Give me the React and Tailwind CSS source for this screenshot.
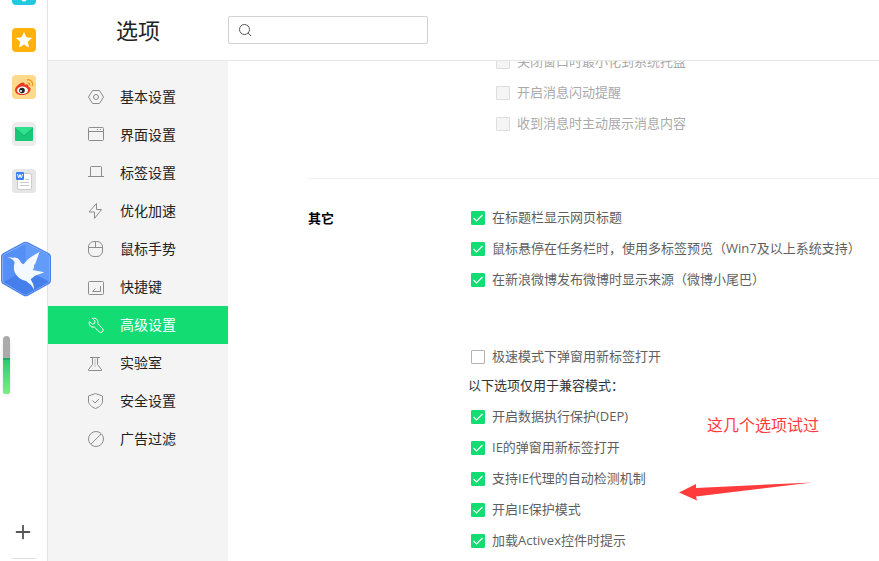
import { Plus } from 'lucide-react'

const navIcons = {
  basic: (
    <>
      <path d="M4.5 1.5h7l4 6.5-4 6.5h-7L.5 8z" />
      <circle cx="8" cy="8" r="2.5" />
    </>
  ),
  window: (
    <>
      <rect x=".5" y=".5" width="15" height="13" rx="1" />
      <path d="M.5 4.5h15M9 2.5h1M12 2.5h1" />
    </>
  ),
  tab: <path d="M0 11.5h16M2.5 11.5v-9a1 1 0 0 1 1-1h9a1 1 0 0 1 1 1v9" />,
  speed: <path d="M8.5.5L1 9h5.5v6.5l7-9H8.5z" />,
  mouse: (
    <>
      <rect x=".5" y=".5" width="14" height="15" rx="5.5" />
      <path d="M.5 6.5h14M7.5.5v6" />
    </>
  ),
  keyboard: (
    <>
      <rect x=".5" y="2.5" width="15" height="13" rx="1" />
      <path d="M12.5 7v5.5h-8l3-3" />
    </>
  ),
  wrench: (
    <path d="M4.500 1.500l2.700 2.700-.7 2.300-2.300.7-2.700-2.700C.3 7.800 2.800 10.800 6.300 10l4.700 4.700a2.300 2.300 0 0 0 3.500-3.200L9.800 6.700C10.700 3 7.800.3 4.500 1.500z" />
  ),
  lab: (
    <>
      <path d="M2 2.500h10M4.500 2.500v7l-4 5v1h13v-1l-4-5v-7" />
      <path d="M7 4.500v7" strokeDasharray="1 1" />
    </>
  ),
  shield: (
    <>
      <path d="M7.5.5l7 2.5v5c0 3.5-3 6-7 7.5-4-1.5-7-4-7-7.5V3z" />
      <path d="M4.5 7.5L7 10l4-4" />
    </>
  ),
  block: (
    <>
      <circle cx="8" cy="8" r="7.5" />
      <path d="M3 13L13 3" />
    </>
  ),
}

const navItems = [
  { icon: 'basic', label: '基本设置' },
  { icon: 'window', label: '界面设置' },
  { icon: 'tab', label: '标签设置' },
  { icon: 'speed', label: '优化加速' },
  { icon: 'mouse', label: '鼠标手势' },
  { icon: 'keyboard', label: '快捷键' },
  { icon: 'wrench', label: '高级设置', active: true },
  { icon: 'lab', label: '实验室' },
  { icon: 'shield', label: '安全设置' },
  { icon: 'block', label: '广告过滤' },
]

const messageOptions = ['关闭窗口时最小化到系统托盘', '开启消息闪动提醒', '收到消息时主动展示消息内容']

const otherOptions = [
  '在标题栏显示网页标题',
  '鼠标悬停在任务栏时，使用多标签预览（Win7及以上系统支持）',
  '在新浪微博发布微博时显示来源（微博小尾巴）',
]

const compatOptions = [
  '开启数据执行保护(DEP)',
  'IE的弹窗用新标签打开',
  '支持IE代理的自动检测机制',
  '开启IE保护模式',
  '加载Activex控件时提示',
]

const NavIcon = ({ name, active }) => (
  <svg
    viewBox="0 0 16 16"
    className={`size-4 ${active ? 'text-white' : 'text-[#8c8c8c]'}`}
    fill="none"
    stroke="currentColor"
    strokeLinejoin="round"
  >
    {navIcons[name]}
  </svg>
)

const Option = ({ label, checked, disabled }) => (
  <label className={`flex h-7 items-center gap-[7px] text-[13px] whitespace-nowrap ${disabled ? 'text-[#aaa]' : 'text-[#5f5f5f]'}`}>
    <span className="grid size-[14px] shrink-0">
      <input
        type="checkbox"
        defaultChecked={checked}
        disabled={disabled}
        className="peer col-start-1 row-start-1 size-[14px] appearance-none rounded-[1px] border border-[#b4b4b4] bg-white checked:border-[#13dc72] checked:bg-[#13dc72] disabled:border-[#ddd] disabled:bg-[#f5f5f5]"
      />
      <svg
        viewBox="0 0 14 14"
        className="pointer-events-none col-start-1 row-start-1 hidden size-[14px] peer-checked:block"
        fill="none"
        stroke="white"
        strokeWidth="1.2"
      >
        <path d="M2.5 7l3 3 6-6" />
      </svg>
    </span>
    {label}
  </label>
)

const AppRail = () => (
  <aside className="flex w-12 shrink-0 flex-col border-r border-[#e2e2e2] bg-white pl-3">
    <div className="-mt-[19px] flex flex-col gap-[23px]">
      <button className="size-6" aria-label="应用">
        <svg viewBox="0 0 24 24">
          <rect width="24" height="24" rx="4" fill="#20c8e0" />
          <circle cx="12" cy="18" r="2.5" fill="white" />
        </svg>
      </button>
      <button className="size-6" aria-label="收藏">
        <svg viewBox="0 0 24 24">
          <rect width="24" height="24" rx="4" fill="#ffb20d" />
          <path
            d="M12 4l2.4 5.300 5.700.6-4.300 3.900 1.200 5.700-5-2.900-5 2.900 1.200-5.700-4.300-3.900 5.700-.6z"
            fill="white"
          />
        </svg>
      </button>
      <button className="size-6" aria-label="微博">
        <svg viewBox="0 0 24 24">
          <rect width="24" height="24" rx="4" fill="#ffd98c" />
          <path
            d="M3 15c0-3 5-7.500 8-7.500 1.500 0 2 1 1.500 2.500 2-.8 4.500-.5 4 1.700 1.500.4 2.500 1.500 2 3.300-.8 3-4.500 5-8.500 5s-7-2-7-5z"
            fill="#e83a20"
          />
          <ellipse cx="10.5" cy="15.3" rx="5.5" ry="3.7" fill="white" />
          <circle cx="10" cy="15.5" r="2.8" fill="#222" />
          <circle cx="9" cy="16" r="1" fill="white" />
          <path d="M15 5c3.500-.8 6.500 2 5.500 6M15.500 8c1.500-.3 2.500.8 2.200 2.300" fill="none" stroke="#f09a22" strokeWidth="1.5" />
        </svg>
      </button>
      <button className="size-6" aria-label="邮件">
        <svg viewBox="0 0 24 24">
          <rect width="24" height="24" rx="4" fill="#ececec" />
          <rect x="3" y="5" width="18" height="14" rx="1" fill="#17c877" />
          <path d="M3 6a1 1 0 0 1 1-1h16a1 1 0 0 1 1 1l-9 8z" fill="#30e08c" />
          <path d="M3 6l9 8 9-8" fill="none" stroke="#0fae62" strokeWidth=".8" />
        </svg>
      </button>
      <button className="size-6" aria-label="文档">
        <svg viewBox="0 0 24 24">
          <rect width="24" height="24" rx="4" fill="#e6e6e6" />
          <rect x="5.5" y="4.5" width="14" height="16" rx="1.5" fill="white" stroke="#ccc" />
          <path d="M13 10.5h4M8 13.5h9M8 16.5h9" stroke="#c8c8c8" />
          <rect x="4" y="3" width="8" height="8" rx="1" fill="#3b82f0" />
          <path d="M5.500 5l1.200 4L8 5.500 9.300 9l1.200-4" fill="none" stroke="white" />
        </svg>
      </button>
    </div>

    <button className="mt-auto flex h-6 w-6 items-center text-[#555]" aria-label="添加">
      <Plus className="size-[22px]" strokeWidth={2} />
    </button>
    <div className="mt-[14px] mb-[2px] h-px w-6 bg-[#ddd]" />
  </aside>
)

const BirdBadge = () => (
  <svg viewBox="0 30 156 174" className="absolute top-[240px] left-0 h-[58px] w-[52px]">
    <path
      d="M70 37q7-4 14 0l62 32q7 4 7 12v70q0 8-7 12l-62 34q-7 4-14 0l-60-34q-7-4-7-12V81q0-8 7-12z"
      fill="#4a82ee"
    />
    <path
      d="M71 42q6-3 12 0l60 31q5 3 5 9v68q0 6-5 9l-60 33q-6 3-12 0l-58-33q-5-3-5-9V82q0-6 5-9z"
      fill="#5590f6"
      stroke="#a9c7fb"
      strokeWidth="2"
    />
    <path d="M77 118l70 38-64 36q-6 3-12 0l-60-35z" fill="#447fec" />
    <path d="M77 118V42l66 32q4 3 4 9v70z" fill="#639bf9" />
    <path
      d="M21 81l18 2q14-3 20 8 3 10 12 12 6-12 22-22l26-16-8 22q-3 12-9 19 2 7-4 14l35 7-28 10-13 11q9 12 11 31-10-17-25-26-25-5-34-27-5-13 0-28-4-12-23-17z"
      fill="#f4f8ff"
    />
  </svg>
)

export default function App() {
  return (
    <div className="relative flex h-screen overflow-hidden bg-white font-['Open_Sans','Noto_Sans_CJK_SC',sans-serif] text-[#222]">
      <AppRail />

      <div className="flex min-w-0 flex-1 flex-col">
        <header className="flex h-[61px] shrink-0 items-center border-b border-[#e6e6e6]">
          <h1 className="w-[180px] pl-[68px] text-[22px]">选项</h1>
          <div className="flex h-7 w-[200px] items-center gap-2 rounded-xs border border-[#d2d2d2] px-[9px]">
            <svg viewBox="0 0 14 14" className="size-[14px] shrink-0" fill="none" stroke="#555">
              <circle cx="6.5" cy="6.5" r="5" />
              <path d="M10 10l3 3" />
            </svg>
            <input type="text" aria-label="搜索" className="min-w-0 flex-1 text-[13px] outline-none" />
          </div>
        </header>

        <div className="flex min-h-0 flex-1">
          <nav className="w-[180px] shrink-0 bg-[#f4f4f4] pt-[17px]">
            {navItems.map((item) => (
              <a
                key={item.label}
                href="#"
                className={`flex h-[38px] items-center gap-4 pl-10 text-sm ${item.active ? 'bg-[#13dc72] text-white' : 'text-[#222]'}`}
              >
                <NavIcon name={item.icon} active={item.active} />
                {item.label}
              </a>
            ))}
          </nav>

          <main className="min-w-0 flex-1 overflow-hidden pl-20">
            {/* Message options, scrolled partly under the header */}
            <section className="-mt-[13px] border-b border-[#f0f0f0] pb-10 pl-[188px]">
              <div className="flex flex-col gap-[3px]">
                {messageOptions.map((label) => (
                  <Option key={label} label={label} disabled />
                ))}
              </div>
            </section>

            {/* Other */}
            <section className="flex pt-[25px]">
              <h2 className="w-[163px] shrink-0 text-[13px] leading-7 font-bold text-black">其它</h2>
              <div>
                <div className="flex flex-col gap-[3px]">
                  {otherOptions.map((label) => (
                    <Option key={label} label={label} checked />
                  ))}
                </div>
                <div className="mt-[49px]">
                  <Option label="极速模式下弹窗用新标签打开" />
                  <p className="-ml-[3px] h-8 text-[13px] leading-7 text-[#333]">以下选项仅用于兼容模式：</p>
                  <div className="flex flex-col gap-[3px]">
                    {compatOptions.map((label) => (
                      <Option key={label} label={label} checked />
                    ))}
                  </div>
                </div>
              </div>
            </section>
          </main>
        </div>
      </div>

      {/* Floating widgets */}
      <BirdBadge />
      <div className="absolute top-[336px] left-[3px] h-[58px] w-[7px] overflow-hidden rounded-full bg-[#aaa] shadow-md">
        <div className="mt-[22px] h-9 border-t-2 border-[#24ad62] bg-linear-to-b from-[#25cc70] to-[#75f27c]" />
      </div>

      {/* Note with arrow */}
      <p className="absolute top-[413px] left-[707px] text-base whitespace-nowrap text-[#ff3b3b]">这几个选项试过</p>
      <svg viewBox="0 0 134 20" className="absolute top-[481px] left-[679px] h-5 w-[134px]" fill="#ff3b3b">
        <path d="M0 11.5L17 3v4l116-5.500L17 15.500l1 4z" />
      </svg>
    </div>
  )
}
